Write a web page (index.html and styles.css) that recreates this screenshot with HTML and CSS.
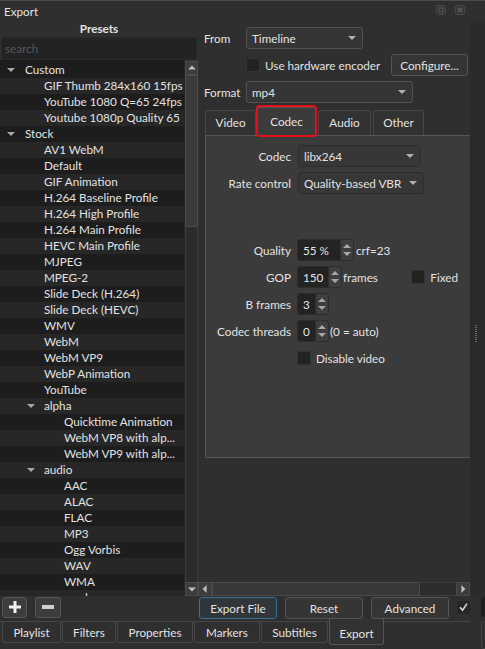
FILE: index.html
```html
<!DOCTYPE html>
<html lang="en">
<head>
<meta charset="utf-8">
<title>Export</title>
<link rel="stylesheet" href="styles.css">
</head>
<body>
<div class="dock">
  <header class="dock-title">
    <span class="dock-name">Export</span>
    <div class="dock-ctrls">
      <svg class="ctrl" viewBox="0 0 10 10" width="10" height="10"><rect x="0.5" y="0.5" width="9" height="9" rx="1" fill="#353535" stroke="#474747"/><rect x="3" y="3" width="4" height="4" fill="none" stroke="#575757"/></svg>
      <svg class="ctrl" viewBox="0 0 10 10" width="10" height="10"><rect x="0.5" y="0.5" width="9" height="9" rx="1" fill="#353535" stroke="#474747"/><path d="M2.8 2.8 L7.2 7.2 M7.2 2.8 L2.8 7.2" stroke="#5e5e5e" stroke-width="1.3"/></svg>
    </div>
  </header>

  <div class="dock-body">
    <aside class="presets">
      <div class="presets-title">Presets</div>
      <input class="search" type="text" placeholder="search">
      <div class="tree-box">
        <ul class="tree">
          <li class="row branch d0">Custom</li>
          <li class="row d1">GIF Thumb 284x160 15fps</li>
          <li class="row d1">YouTube 1080 Q=65 24fps</li>
          <li class="row d1">Youtube 1080p Quality 65</li>
          <li class="row branch d0">Stock</li>
          <li class="row d1">AV1 WebM</li>
          <li class="row d1">Default</li>
          <li class="row d1">GIF Animation</li>
          <li class="row d1">H.264 Baseline Profile</li>
          <li class="row d1">H.264 High Profile</li>
          <li class="row d1">H.264 Main Profile</li>
          <li class="row d1">HEVC Main Profile</li>
          <li class="row d1">MJPEG</li>
          <li class="row d1">MPEG-2</li>
          <li class="row d1">Slide Deck (H.264)</li>
          <li class="row d1">Slide Deck (HEVC)</li>
          <li class="row d1">WMV</li>
          <li class="row d1">WebM</li>
          <li class="row d1">WebM VP9</li>
          <li class="row d1">WebP Animation</li>
          <li class="row d1">YouTube</li>
          <li class="row branch d1">alpha</li>
          <li class="row d2">Quicktime Animation</li>
          <li class="row d2">WebM VP8 with alp...</li>
          <li class="row d2">WebM VP9 with alp...</li>
          <li class="row branch d1">audio</li>
          <li class="row d2">AAC</li>
          <li class="row d2">ALAC</li>
          <li class="row d2">FLAC</li>
          <li class="row d2">MP3</li>
          <li class="row d2">Ogg Vorbis</li>
          <li class="row d2">WAV</li>
          <li class="row d2">WMA</li>
          <li class="row branch d1">camcorder</li>
        </ul>
        <div class="vscroll">
          <span class="sb-btn sb-up"></span>
          <span class="sb-thumb"></span>
          <span class="sb-track"></span>
          <span class="sb-btn sb-down"></span>
        </div>
      </div>
    </aside>

    <section class="settings">
      <div class="settings-scroll">
        <div class="viewport">
          <div class="form-top">
            <span class="lbl">From</span>
            <div class="combo from-combo">Timeline</div>
            <span></span>
            <div class="hw-row">
              <span class="checkbox"></span>
              <span class="hw-text">Use hardware encoder</span>
              <button class="btn configure">Configure...</button>
            </div>
            <span class="lbl">Format</span>
            <div class="combo format-combo">mp4</div>
          </div>

          <div class="tabbar">
            <span class="tab tab-video">Video</span>
            <span class="tab tab-codec active marked">Codec</span>
            <span class="tab tab-audio">Audio</span>
            <span class="tab tab-other">Other</span>
          </div>

          <div class="pane">
            <span class="lbl">Codec</span>
            <div class="field"><div class="combo codec-combo">libx264</div></div>
            <span class="lbl">Rate control</span>
            <div class="field"><div class="combo rate-combo">Quality-based VBR</div></div>
            <span class="spacer"></span>
            <span class="lbl">Quality</span>
            <div class="field">
              <div class="spin spin-quality"><span class="spin-val">55 %</span><span class="spin-arrows"></span></div>
              <span class="suffix">crf=23</span>
            </div>
            <span class="lbl">GOP</span>
            <div class="field">
              <div class="spin spin-gop"><span class="spin-val">150</span><span class="spin-arrows"></span></div>
              <span class="suffix tight">frames</span>
              <span class="fixed"><span class="checkbox"></span>Fixed</span>
            </div>
            <span class="lbl">B frames</span>
            <div class="field">
              <div class="spin spin-small"><span class="spin-val">3</span><span class="spin-arrows"></span></div>
            </div>
            <span class="lbl">Codec threads</span>
            <div class="field">
              <div class="spin spin-small"><span class="spin-val">0</span><span class="spin-arrows"></span></div>
              <span class="suffix tight">(0 = auto)</span>
            </div>
            <span></span>
            <div class="field"><span class="checkbox"></span><span class="check-text">Disable video</span></div>
          </div>
        </div>

        <div class="hscroll">
          <span class="sb-btn sb-left"></span>
          <span class="h-thumb"></span>
          <span class="h-track"></span>
          <span class="sb-btn sb-right"></span>
        </div>
      </div>
      <div class="side-strip"><span class="grip"></span></div>
    </section>
  </div>

  <div class="actions">
    <div class="list-tools">
      <button class="tool-btn" aria-label="Add preset"><svg viewBox="0 0 12 12" width="12" height="12"><path d="M4.5 0h3v4.5H12v3H7.5V12h-3V7.5H0v-3h4.5z" fill="#f2f2f2"/></svg></button>
      <button class="tool-btn minus" aria-label="Remove preset"><svg viewBox="0 0 12 4" width="12" height="4"><rect width="12" height="4" fill="#d0d0d0"/></svg></button>
    </div>
    <div class="export-buttons">
      <button class="btn wide primary">Export File</button>
      <button class="btn wide">Reset</button>
      <button class="btn wide">Advanced</button>
      <span class="check-toggle"><svg viewBox="0 0 13 12" width="13" height="12"><path d="M3 6.2 L5.6 9.2 L10 2.6" fill="none" stroke="#d6d6d6" stroke-width="1.6"/></svg></span>
    </div>
    <span class="edge-bit"></span>
  </div>

  <nav class="dock-tabs">
    <div class="dock-tabstrip">
      <span class="dtab w-playlist">Playlist</span>
      <span class="dtab w-filters">Filters</span>
      <span class="dtab w-properties">Properties</span>
      <span class="dtab w-markers">Markers</span>
      <span class="dtab w-subtitles">Subtitles</span>
      <span class="dtab w-export current">Export</span>
    </div>
    <span class="edge-box"></span>
  </nav>
</div>
</body>
</html>
```

FILE: styles.css
```css
* { box-sizing: border-box; }

html, body {
  margin: 0;
  padding: 0;
}

body {
  width: 485px;
  height: 649px;
  overflow: hidden;
  background: #2f2f2f;
  color: #e2e2e2;
  font-family: Lato, "Open Sans", sans-serif;
  font-size: 11.7px;
}

button {
  font: inherit;
  color: inherit;
}

.dock {
  display: flex;
  flex-direction: column;
  height: 649px;
  border-top: 1px solid #4c4c4c;
}

/* dock title bar */
.dock-title {
  height: 20px;
  display: flex;
  align-items: center;
  padding-left: 4px;
  padding-top: 1px;
}

.dock-ctrls {
  margin-left: auto;
  margin-right: 20px;
  margin-top: -3px;
  display: flex;
  gap: 9px;
}

.ctrl { display: block; }

.dock-body {
  height: 576px;
  display: flex;
}

/* presets column */
.presets {
  width: 198px;
  display: flex;
  flex-direction: column;
}

.presets-title {
  height: 16px;
  line-height: 15px;
  text-align: center;
  font-weight: bold;
}

.search {
  height: 23px;
  margin: 0 1px;
  padding: 0 3px;
  background: #232323;
  border: 1px solid #292929;
  border-radius: 2px;
  font: inherit;
  color: #dedede;
  outline: none;
}

.search::placeholder { color: #585858; }

.tree-box {
  flex: 1;
  display: flex;
  margin-bottom: 1px;
  overflow: hidden;
  background: #1d1d1d;
}

.tree {
  list-style: none;
  margin: 0;
  padding: 2px 0 0;
  width: 184px;
  overflow: hidden;
}

.row {
  height: 16px;
  line-height: 15px;
  white-space: nowrap;
  background: #1d1d1d;
}

.row:nth-child(even) { background: #272727; }

.d0 { padding-left: 25px; }
.d1 { padding-left: 44px; }
.d2 { padding-left: 64px; }

.branch::before {
  content: "";
  display: inline-block;
  width: 0;
  height: 0;
  border-left: 4px solid transparent;
  border-right: 4px solid transparent;
  border-top: 4px solid #a8a8a8;
  margin-left: -17px;
  margin-right: 9px;
  vertical-align: 2px;
}

.d0.branch::before { margin-left: -18px; margin-right: 10px; }

.vscroll {
  width: 14px;
  display: flex;
  flex-direction: column;
  background: #2e2e2e;
  border-left: 1px solid #262626;
  padding-top: 1px;
}

.sb-btn {
  position: relative;
  display: block;
  height: 14px;
  flex: none;
  background: #3c3c3c;
  border: 1px solid #4a4a4a;
}

.sb-btn::after {
  content: "";
  position: absolute;
  left: 50%;
  top: 50%;
  width: 0;
  height: 0;
}

.sb-up::after {
  border-left: 4px solid transparent;
  border-right: 4px solid transparent;
  border-bottom: 4px solid #bdbdbd;
  transform: translate(-50%, -60%);
}

.sb-down::after {
  border-left: 4px solid transparent;
  border-right: 4px solid transparent;
  border-top: 4px solid #bdbdbd;
  transform: translate(-50%, -40%);
}

.sb-left::after {
  border-top: 4px solid transparent;
  border-bottom: 4px solid transparent;
  border-right: 4px solid #bdbdbd;
  transform: translate(-60%, -50%);
}

.sb-right::after {
  border-top: 4px solid transparent;
  border-bottom: 4px solid transparent;
  border-left: 4px solid #bdbdbd;
  transform: translate(-40%, -50%);
}

.sb-thumb {
  height: 152px;
  flex: none;
  background: #3a3a3a;
  border: 1px solid #4b4b4b;
}

.sb-track {
  flex: 1;
  background: #2c2c2c;
  border: 1px solid #3a3a3a;
  border-top: none;
  border-bottom: none;
}

/* settings side */
.settings {
  flex: 1;
  display: flex;
}

.settings-scroll {
  width: 272px;
  display: flex;
  flex-direction: column;
}

.viewport {
  flex: 1;
  overflow: hidden;
  padding: 6px 0 0 6px;
}

.lbl {
  text-align: right;
  line-height: 23px;
  white-space: nowrap;
}

.form-top {
  display: grid;
  grid-template-columns: 38px auto;
  grid-auto-rows: 22px;
  column-gap: 4px;
  row-gap: 5px;
  justify-items: start;
}

.combo {
  position: relative;
  height: 22px;
  line-height: 21px;
  padding-left: 5px;
  background: #353535;
  border: 1px solid #525252;
  border-radius: 3px;
  white-space: nowrap;
}

.combo::after {
  content: "";
  position: absolute;
  right: 6px;
  top: 8px;
  width: 0;
  height: 0;
  border-left: 4px solid transparent;
  border-right: 4px solid transparent;
  border-top: 4px solid #b0b0b0;
}

.from-combo { width: 117px; }
.format-combo { width: 167px; }

.hw-row {
  width: 222px;
  height: 22px;
  display: flex;
  align-items: center;
}

.checkbox {
  display: inline-block;
  width: 14px;
  height: 14px;
  flex: none;
  background: #222222;
  border: 1px solid #333333;
  border-radius: 2px;
}

.hw-text { margin-left: 5px; white-space: nowrap; padding-top: 1px; }

.btn {
  height: 22px;
  padding: 1px 7px 0;
  background: #353535;
  border: 1px solid #535353;
  border-radius: 3px;
  white-space: nowrap;
}

.configure {
  margin-left: auto;
  width: 77px;
  padding: 1px 0 0;
}

/* codec tabs */
.tabbar {
  margin: 4px 0 0 1px;
  height: 28px;
  display: flex;
  align-items: flex-end;
  gap: 2px;
}

.tab {
  height: 25px;
  line-height: 23px;
  text-align: center;
  background: #323232;
  border: 1px solid #484848;
  border-bottom: none;
  border-radius: 3px 3px 0 0;
  white-space: nowrap;
}

.tab-video { width: 51px; margin-right: -1px; }
.tab-codec { width: 59px; }
.tab-audio { width: 53px; }
.tab-other { width: 51px; }

.tab.active {
  position: relative;
  z-index: 1;
  height: 29px;
  line-height: 26px;
  margin-bottom: -1px;
  background: #3b3b3b;
  border-color: #565656;
}

/* highlight ring drawn around the active codec tab */
.tab.marked::after {
  content: "";
  position: absolute;
  top: -3px;
  left: -2px;
  right: -2px;
  bottom: -1px;
  border: 2px solid #e3101a;
  border-radius: 4px;
}

.pane {
  margin-left: 1px;
  width: 290px;
  height: 323px;
  background: #3b3b3b;
  border: 1px solid #565656;
  padding-top: 9px;
  display: grid;
  grid-template-columns: 85px 161px;
  grid-template-rows: 22px 22px 35px repeat(5, 22px);
  column-gap: 6px;
  row-gap: 5px;
  align-content: start;
}

.spacer { grid-column: 1 / -1; }

.field {
  display: flex;
  align-items: center;
  white-space: nowrap;
}

.field > span { padding-top: 1px; }

.pane .combo {
  background: #373737;
  border-color: #2c2c2c;
}

.codec-combo { width: 123px; margin-left: 1px; }
.rate-combo { width: 126px; margin-left: 1px; }

.spin {
  display: flex;
  height: 22px;
  border: 1px solid #2c2c2c;
  border-radius: 3px;
  background: #232323;
  overflow: hidden;
}

.spin-val {
  flex: 1;
  line-height: 21px;
  padding-left: 5px;
}

.spin-arrows {
  position: relative;
  width: 13px;
  background: #3e3e3e;
  border-left: 1px solid #2c2c2c;
}

.spin-arrows::before,
.spin-arrows::after {
  content: "";
  position: absolute;
  left: 2px;
  width: 0;
  height: 0;
  border-left: 4px solid transparent;
  border-right: 4px solid transparent;
}

.spin-arrows::before {
  top: 4px;
  border-bottom: 4px solid #a6a6a6;
}

.spin-arrows::after {
  bottom: 4px;
  border-top: 4px solid #a6a6a6;
}

.spin-quality { width: 57px; }
.spin-gop { width: 45px; }
.spin-small { width: 32px; }

.suffix { margin-left: 2px; }
.suffix.tight { margin-left: 1px; }

.fixed {
  margin-left: auto;
  display: flex;
  align-items: center;
  gap: 5px;
}

.check-text { margin-left: 5px; }

/* horizontal scroller under the form */
.hscroll {
  height: 14px;
  margin-bottom: 1px;
  display: flex;
  background: #2c2c2c;
}

.hscroll .sb-btn {
  width: 14px;
  height: 14px;
}

.h-thumb {
  width: 208px;
  background: #383838;
  border: 1px solid #4a4a4a;
}

.h-track {
  flex: 1;
  border-top: 1px solid #3a3a3a;
  border-bottom: 1px solid #3a3a3a;
}

.side-strip {
  flex: 1;
  position: relative;
  display: flex;
  align-items: center;
  justify-content: center;
  background: #2b2b2b;
}

.grip {
  width: 2px;
  height: 17px;
  margin-right: 3px;
  margin-top: 50px;
  background: repeating-linear-gradient(#6a6a6a 0 1px, transparent 1px 2px);
}

/* action row */
.actions {
  height: 25px;
  display: flex;
  align-items: flex-start;
}

.list-tools {
  width: 198px;
  display: flex;
  gap: 8px;
  padding-left: 2px;
}

.tool-btn {
  width: 25px;
  height: 21px;
  display: flex;
  align-items: center;
  justify-content: center;
  padding: 0;
  background: #3d3d3d;
  border: 1px solid #555555;
  border-radius: 3px;
}

.tool-btn.minus { width: 26px; }

.tool-btn svg { display: block; }

.export-buttons {
  display: flex;
  align-items: flex-start;
  gap: 8px;
  padding-left: 1px;
}

.btn.wide { width: 78px; padding: 1px 0 0; }

.btn.primary {
  background: #30363a;
  border-color: #3b7289;
}

.check-toggle {
  width: 13px;
  height: 13px;
  margin-top: 4px;
  display: flex;
  align-items: center;
  justify-content: center;
  background: #262626;
  border-radius: 1px;
}

.check-toggle svg { display: block; }

.edge-bit {
  margin-left: auto;
  width: 4px;
  height: 20px;
  background: #1d1d1d;
  border-radius: 3px 0 0 3px;
}

/* dock tab bar */
.dock-tabs {
  flex: 1;
  display: flex;
}

.dock-tabstrip {
  width: 470px;
  display: flex;
  align-items: flex-start;
  gap: 1px;
  padding-left: 2px;
  border-top: 1px solid #454545;
}

.dtab {
  height: 21px;
  line-height: 20px;
  text-align: center;
  background: #2f2f2f;
  border: 1px solid #464646;
  border-top: none;
  border-radius: 0 0 3px 3px;
  white-space: nowrap;
}

.w-playlist { width: 59px; }
.w-filters { width: 54px; }
.w-properties { width: 76px; }
.w-markers { width: 66px; }
.w-subtitles { width: 67px; }
.w-export { width: 55px; }

.dtab.current {
  height: 26px;
  margin-top: -3px;
  line-height: 28px;
  background: #323232;
  border: 1px solid #545454;
  border-top: none;
}

.edge-box {
  margin-left: auto;
  margin-top: 0;
  width: 4px;
  height: 28px;
  border: 1px solid #454545;
  border-right: none;
  border-radius: 3px 0 0 3px;
}
```
